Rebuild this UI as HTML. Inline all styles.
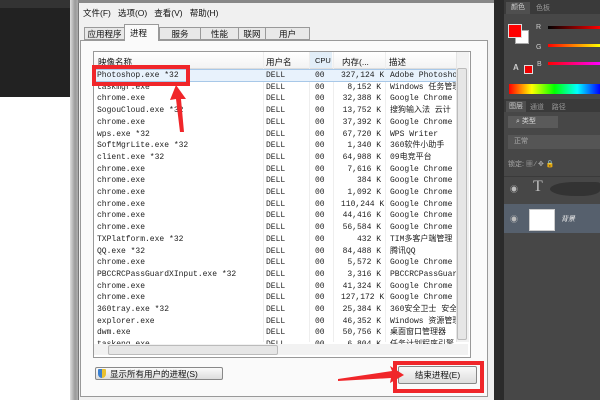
<!DOCTYPE html><html><head><meta charset="utf-8"><style>
body{margin:0;width:600px;height:400px;overflow:hidden;position:relative;background:#fff;font-family:"Liberation Sans","Noto Sans CJK SC",sans-serif;}
.a{position:absolute}
.row{position:absolute;left:0;height:12px;line-height:11px;font:8px/11px "Liberation Mono","Noto Sans CJK SC",monospace;color:#222;white-space:nowrap}
.row span{position:absolute;top:0}
.t{font-size:8.5px;color:#111;white-space:nowrap}
.tab{position:absolute;top:27px;height:13px;border:1px solid #999;background:#e8e8e8;font-size:8.5px;line-height:13px;color:#111;text-align:center;white-space:nowrap;box-sizing:border-box}
</style></head><body>
<div class="a" style="left:0;top:0;width:75px;height:97px;background:#222"></div>
<div class="a" style="left:0;top:0;width:75px;height:8px;background:#333"></div>
<div class="a" style="left:70px;top:0;width:10px;height:400px;background:linear-gradient(90deg,#ddd,#9a9a9a,#bbb)"></div>
<div class="a" style="left:78px;top:0;width:416px;height:400px;background:#f0f0f0;border-left:1px solid #777"></div>
<div class="a" style="left:78px;top:0;width:416px;height:3px;background:#888"></div>
<div class="a t" style="left:83px;top:7px">文件(F)&nbsp;&nbsp; 选项(O)&nbsp;&nbsp; 查看(V)&nbsp;&nbsp; 帮助(H)</div>
<div class="a" style="left:80px;top:40px;width:406px;height:355px;background:#fafafa;border:1px solid #999"></div>
<div class="tab" style="left:84px;width:41px">应用程序</div>
<div class="tab" style="left:159px;width:42px">服务</div>
<div class="tab" style="left:200px;width:39px">性能</div>
<div class="tab" style="left:238px;width:28px">联网</div>
<div class="tab" style="left:265px;width:45px">用户</div>
<div class="a t" style="left:124px;top:24px;width:35px;height:17px;border:1px solid #999;border-bottom:none;background:#fafafa;box-sizing:border-box"><span class="a" style="left:5px;top:2px">进程</span></div>
<div class="a" style="left:93px;top:51px;width:376px;height:305px;background:#fff;border:1px solid #999"></div>
<div class="a" style="left:94px;top:52px;width:362px;height:16px;background:linear-gradient(#fff,#f3f3f3);border-bottom:1px solid #ddd"></div>
<div class="a" style="left:310px;top:52px;width:22px;height:16px;background:#e2eef8"></div>
<div class="a t" style="left:98px;top:56px">映像名称</div>
<div class="a t" style="left:266px;top:56px">用户名</div>
<div class="a t" style="left:315px;top:56px;font-size:7.5px">CPU</div>
<div class="a t" style="left:342px;top:56px">内存(...</div>
<div class="a t" style="left:389px;top:56px">描述</div>
<div class="a" style="left:263px;top:52px;width:1px;height:290px;background:#eee"></div>
<div class="a" style="left:309px;top:52px;width:1px;height:290px;background:#eee"></div>
<div class="a" style="left:333px;top:52px;width:1px;height:290px;background:#eee"></div>
<div class="a" style="left:385px;top:52px;width:1px;height:290px;background:#eee"></div>
<div class="a" style="left:95px;top:69px;width:361px;height:11px;background:#e8f2fc;border:1px solid #a8c8e8"></div>
<div class="a" style="left:94px;top:69px;width:362px;height:275px;overflow:hidden">
<div class="row" style="top:1px"><span style="left:3px">Photoshop.exe *32</span><span style="left:172px">DELL</span><span style="left:221px">00</span><span style="left:247px;width:40px;text-align:right">327,124 K</span><span style="left:296px">Adobe Photoshop</span></div>
<div class="row" style="top:12.7px"><span style="left:3px">taskmgr.exe</span><span style="left:172px">DELL</span><span style="left:221px">00</span><span style="left:247px;width:40px;text-align:right">8,152 K</span><span style="left:296px">Windows 任务管理</span></div>
<div class="row" style="top:24.4px"><span style="left:3px">chrome.exe</span><span style="left:172px">DELL</span><span style="left:221px">00</span><span style="left:247px;width:40px;text-align:right">32,388 K</span><span style="left:296px">Google Chrome</span></div>
<div class="row" style="top:36.1px"><span style="left:3px">SogouCloud.exe *32</span><span style="left:172px">DELL</span><span style="left:221px">00</span><span style="left:247px;width:40px;text-align:right">13,752 K</span><span style="left:296px">搜狗输入法 云计</span></div>
<div class="row" style="top:47.8px"><span style="left:3px">chrome.exe</span><span style="left:172px">DELL</span><span style="left:221px">00</span><span style="left:247px;width:40px;text-align:right">37,392 K</span><span style="left:296px">Google Chrome</span></div>
<div class="row" style="top:59.5px"><span style="left:3px">wps.exe *32</span><span style="left:172px">DELL</span><span style="left:221px">00</span><span style="left:247px;width:40px;text-align:right">67,720 K</span><span style="left:296px">WPS Writer</span></div>
<div class="row" style="top:71.2px"><span style="left:3px">SoftMgrLite.exe *32</span><span style="left:172px">DELL</span><span style="left:221px">00</span><span style="left:247px;width:40px;text-align:right">1,340 K</span><span style="left:296px">360软件小助手</span></div>
<div class="row" style="top:82.9px"><span style="left:3px">client.exe *32</span><span style="left:172px">DELL</span><span style="left:221px">00</span><span style="left:247px;width:40px;text-align:right">64,988 K</span><span style="left:296px">09电竞平台</span></div>
<div class="row" style="top:94.6px"><span style="left:3px">chrome.exe</span><span style="left:172px">DELL</span><span style="left:221px">00</span><span style="left:247px;width:40px;text-align:right">7,616 K</span><span style="left:296px">Google Chrome</span></div>
<div class="row" style="top:106.3px"><span style="left:3px">chrome.exe</span><span style="left:172px">DELL</span><span style="left:221px">00</span><span style="left:247px;width:40px;text-align:right">384 K</span><span style="left:296px">Google Chrome</span></div>
<div class="row" style="top:118px"><span style="left:3px">chrome.exe</span><span style="left:172px">DELL</span><span style="left:221px">00</span><span style="left:247px;width:40px;text-align:right">1,092 K</span><span style="left:296px">Google Chrome</span></div>
<div class="row" style="top:129.7px"><span style="left:3px">chrome.exe</span><span style="left:172px">DELL</span><span style="left:221px">00</span><span style="left:247px;width:40px;text-align:right">110,244 K</span><span style="left:296px">Google Chrome</span></div>
<div class="row" style="top:141.4px"><span style="left:3px">chrome.exe</span><span style="left:172px">DELL</span><span style="left:221px">00</span><span style="left:247px;width:40px;text-align:right">44,416 K</span><span style="left:296px">Google Chrome</span></div>
<div class="row" style="top:153.1px"><span style="left:3px">chrome.exe</span><span style="left:172px">DELL</span><span style="left:221px">00</span><span style="left:247px;width:40px;text-align:right">56,584 K</span><span style="left:296px">Google Chrome</span></div>
<div class="row" style="top:164.8px"><span style="left:3px">TXPlatform.exe *32</span><span style="left:172px">DELL</span><span style="left:221px">00</span><span style="left:247px;width:40px;text-align:right">432 K</span><span style="left:296px">TIM多客户端管理</span></div>
<div class="row" style="top:176.5px"><span style="left:3px">QQ.exe *32</span><span style="left:172px">DELL</span><span style="left:221px">00</span><span style="left:247px;width:40px;text-align:right">84,488 K</span><span style="left:296px">腾讯QQ</span></div>
<div class="row" style="top:188.2px"><span style="left:3px">chrome.exe</span><span style="left:172px">DELL</span><span style="left:221px">00</span><span style="left:247px;width:40px;text-align:right">5,572 K</span><span style="left:296px">Google Chrome</span></div>
<div class="row" style="top:199.9px"><span style="left:3px">PBCCRCPassGuardXInput.exe *32</span><span style="left:172px">DELL</span><span style="left:221px">00</span><span style="left:247px;width:40px;text-align:right">3,316 K</span><span style="left:296px">PBCCRCPassGuardX</span></div>
<div class="row" style="top:211.6px"><span style="left:3px">chrome.exe</span><span style="left:172px">DELL</span><span style="left:221px">00</span><span style="left:247px;width:40px;text-align:right">41,324 K</span><span style="left:296px">Google Chrome</span></div>
<div class="row" style="top:223.3px"><span style="left:3px">chrome.exe</span><span style="left:172px">DELL</span><span style="left:221px">00</span><span style="left:247px;width:40px;text-align:right">127,172 K</span><span style="left:296px">Google Chrome</span></div>
<div class="row" style="top:235px"><span style="left:3px">360tray.exe *32</span><span style="left:172px">DELL</span><span style="left:221px">00</span><span style="left:247px;width:40px;text-align:right">25,384 K</span><span style="left:296px">360安全卫士 安全</span></div>
<div class="row" style="top:246.7px"><span style="left:3px">explorer.exe</span><span style="left:172px">DELL</span><span style="left:221px">00</span><span style="left:247px;width:40px;text-align:right">46,352 K</span><span style="left:296px">Windows 资源管理</span></div>
<div class="row" style="top:258.4px"><span style="left:3px">dwm.exe</span><span style="left:172px">DELL</span><span style="left:221px">00</span><span style="left:247px;width:40px;text-align:right">50,756 K</span><span style="left:296px">桌面窗口管理器</span></div>
<div class="row" style="top:270.1px"><span style="left:3px">taskeng.exe</span><span style="left:172px">DELL</span><span style="left:221px">00</span><span style="left:247px;width:40px;text-align:right">6,804 K</span><span style="left:296px">任务计划程序引擎</span></div>
</div>
<div class="a" style="left:456px;top:52px;width:12px;height:290px;background:#f2f2f2;border-left:1px solid #e4e4e4"></div>
<div class="a" style="left:457px;top:68px;width:10px;height:272px;background:#e6e6e6;border:1px solid #bbb;border-radius:2px;box-sizing:border-box"></div>
<div class="a" style="left:94px;top:344px;width:374px;height:11px;background:#f2f2f2"></div>
<div class="a" style="left:108px;top:345px;width:168px;height:8px;background:#e6e6e6;border:1px solid #bbb;border-radius:2px"></div>
<div class="a" style="left:95px;top:367px;width:128px;height:13px;background:linear-gradient(#fafafa,#ddd);border:1px solid #888;border-radius:2px;font-size:8.5px;color:#111;line-height:13px;padding-left:14px;box-sizing:border-box;white-space:nowrap">显示所有用户的进程(S)</div>
<div class="a" style="left:98px;top:369px;width:8px;height:9px;background:linear-gradient(90deg,#3a7fd0 50%,#e8c030 50%);border-radius:1px 1px 4px 4px"></div>
<div class="a" style="left:398px;top:366px;width:77px;height:16px;background:linear-gradient(#fafafa,#ddd);border:1px solid #888;border-radius:2px;font-size:8.5px;color:#111;line-height:16px;text-align:center">结束进程(E)</div>
<div class="a" style="left:393px;top:361px;width:83px;height:24px;border:4px solid #f0262a"></div>
<div class="a" style="left:92px;top:65px;width:90px;height:13px;border:4px solid #f0262a"></div>
<svg class="a" style="left:0;top:0" width="600" height="400">
<polygon points="176,85 186,99 181,99 184,132 180,132 176,99 170,100" fill="#f0262a"/>
<polygon points="338,379 392,371 390,366 404,375 390,383 391,378 338,381" fill="#f0262a"/>
</svg>
<div class="a" style="left:494px;top:0;width:10px;height:400px;background:#2b2b2b"></div>
<div class="a" style="left:504px;top:0;width:96px;height:400px;background:#474747"></div>
<div class="a" style="left:504px;top:0;width:96px;height:14px;background:#3a3a3a"></div>
<div class="a" style="left:506px;top:2px;width:24px;height:12px;background:#4f4f4f;font-size:7px;color:#ccc;text-align:center">颜色</div>
<div class="a" style="left:536px;top:3px;font-size:7px;color:#999">色板</div>
<div class="a" style="left:515px;top:30px;width:12px;height:12px;background:#fff;border:1px solid #aaa"></div>
<div class="a" style="left:508px;top:24px;width:12px;height:12px;background:#f00;border:1px solid #ddd"></div>
<div class="a" style="left:536px;top:24px;font-size:7px;color:#ccc">R</div>
<div class="a" style="left:536px;top:44px;font-size:7px;color:#ccc">G</div>
<div class="a" style="left:537px;top:61px;font-size:7px;color:#ccc">B</div>
<div class="a" style="left:513px;top:63px;font-size:8px;color:#ccc;font-weight:bold">A</div>
<div class="a" style="left:524px;top:65px;width:7px;height:7px;background:#e00;border:1px solid #ddd"></div>
<div class="a" style="left:548px;top:26px;width:52px;height:3px;background:linear-gradient(90deg,#000,#f00)"></div>
<div class="a" style="left:548px;top:44px;width:52px;height:3px;background:linear-gradient(90deg,#f00,#ff0)"></div>
<div class="a" style="left:548px;top:62px;width:52px;height:3px;background:linear-gradient(90deg,#f00,#f0f)"></div>
<div class="a" style="left:509px;top:84px;width:91px;height:10px;background:linear-gradient(90deg,#f00,#ff0,#0f0,#0ff,#00f)"></div>
<div class="a" style="left:504px;top:99px;width:96px;height:13px;background:#3a3a3a"></div>
<div class="a" style="left:506px;top:101px;width:20px;height:11px;background:#4f4f4f;font-size:7px;color:#ccc;text-align:center">图层</div>
<div class="a" style="left:530px;top:102px;font-size:7px;color:#999;white-space:nowrap">通道&nbsp;&nbsp;&nbsp; 路径</div>
<div class="a" style="left:508px;top:116px;width:50px;height:12px;background:#5a5a5a;font-size:7px;color:#ddd;line-height:12px;padding-left:8px;box-sizing:border-box">⌕ 类型</div>
<div class="a" style="left:508px;top:135px;width:92px;height:14px;background:#555;font-size:7px;color:#aaa;line-height:14px;padding-left:6px;box-sizing:border-box">正常</div>
<div class="a" style="left:508px;top:159px;font-size:7px;color:#aaa;white-space:nowrap">锁定: ▦ ∕ ✥ 🔒</div>
<div class="a" style="left:504px;top:176px;width:96px;height:1px;background:#3a3a3a"></div>
<div class="a" style="left:510px;top:184px;font-size:8px;color:#bbb">◉</div>
<div class="a" style="left:533px;top:178px;font-size:16px;color:#bbb;font-family:'Liberation Serif',serif">T</div>
<div class="a" style="left:550px;top:182px;width:50px;height:14px;background:#333;border-radius:50% 10% 40% 50%"></div>
<div class="a" style="left:504px;top:204px;width:96px;height:29px;background:#56606d"></div>
<div class="a" style="left:510px;top:214px;font-size:8px;color:#bbb">◉</div>
<div class="a" style="left:529px;top:209px;width:24px;height:20px;background:#fff;border:1px solid #ccc"></div>
<div class="a" style="left:561px;top:214px;font-size:7px;color:#eee;font-style:italic">背景</div>
</body></html>
